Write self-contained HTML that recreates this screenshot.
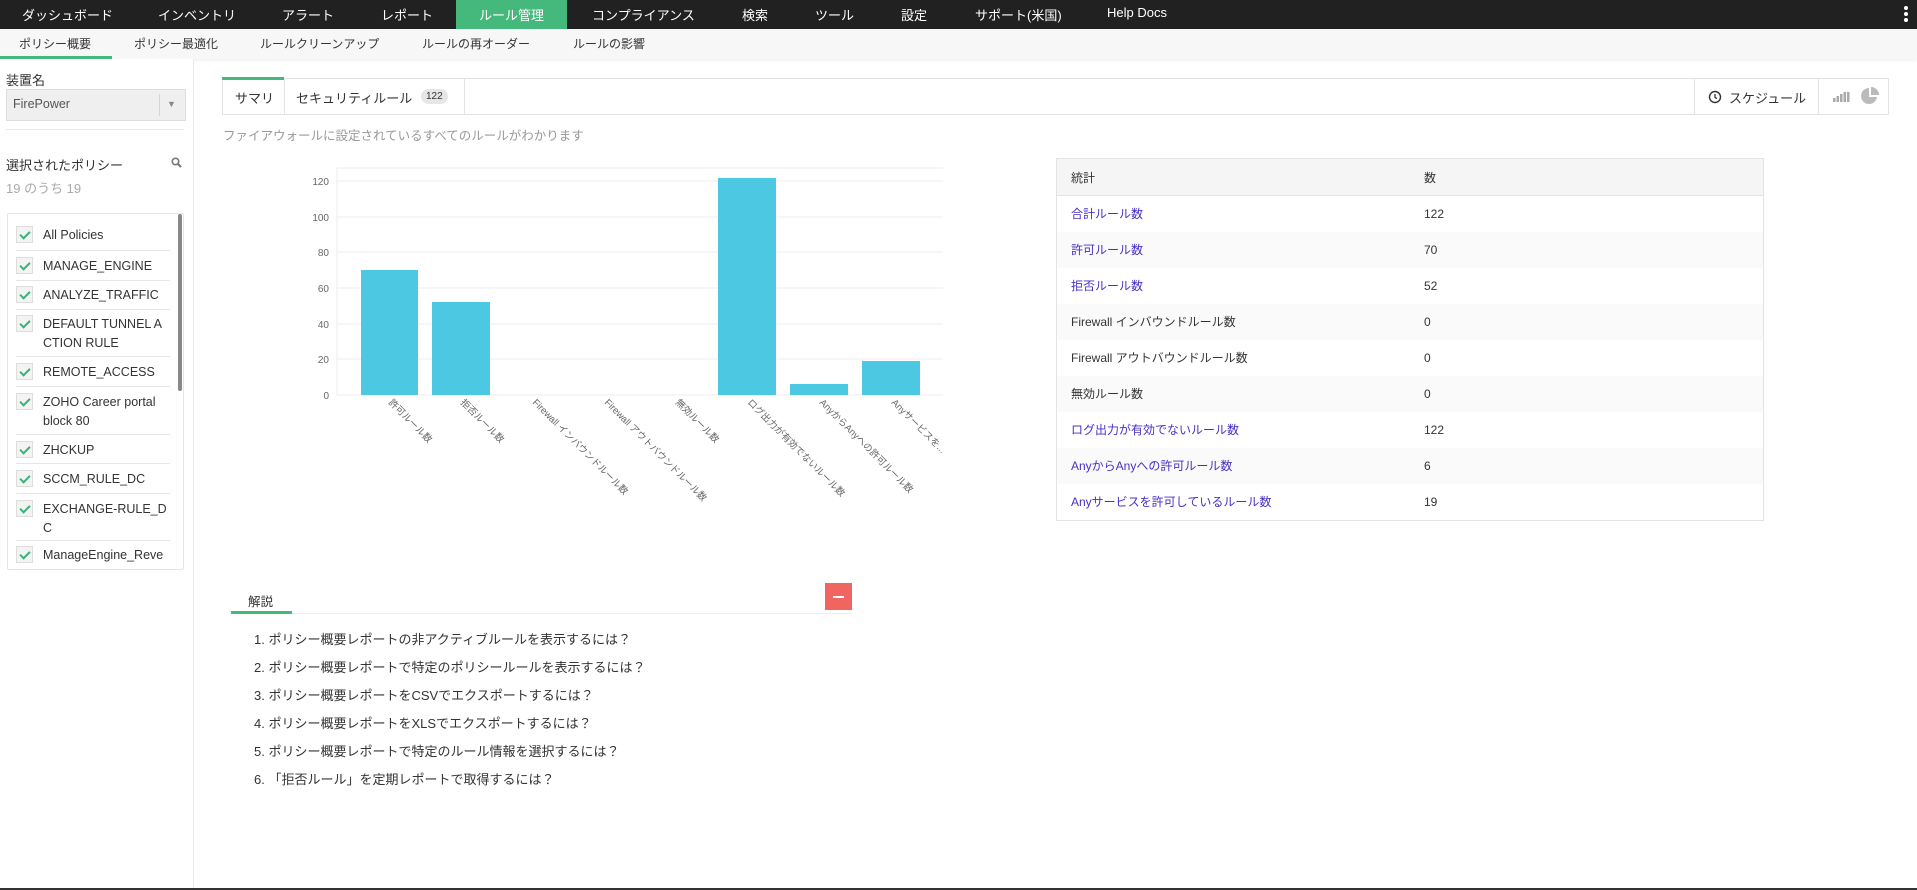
<!DOCTYPE html>
<html><head><meta charset="utf-8">
<style>
*{margin:0;padding:0;box-sizing:border-box}
body{width:1917px;height:890px;overflow:hidden;background:#fff;font-family:"Liberation Sans","Noto Sans CJK JP",sans-serif;color:#333;position:relative}
.a{position:absolute;white-space:nowrap}
#top{position:absolute;left:0;top:0;width:1917px;height:29px;background:#212121}
#top .a{color:#fff;font-size:13px;top:5px}
#sub{position:absolute;left:0;top:29px;width:1917px;height:30px;background:#f7f7f7;box-shadow:0 2px 3px rgba(0,0,0,.06)}
#sub .a{font-size:12px;top:6px;color:#333}
#side{position:absolute;left:0;top:59px;width:194px;height:830px;border-right:1px solid #e8e8e8;background:#fff}
.item{position:absolute;left:16px;width:154px;border-bottom:1px solid #e6e6e6;font-size:12.5px;color:#333}
.cb{position:absolute;left:0;width:17px;height:17px;border:1px solid #ddd;background:#f3f3f3}
.cb:after{content:"";position:absolute;left:5px;top:2px;width:4px;height:8px;border:solid #3bb17a;border-width:0 2px 2px 0;transform:rotate(45deg)}
.item span{position:absolute;left:27px;line-height:19px}
.tr{position:absolute;left:1057px;width:706px;height:36px;font-size:12px;line-height:16px}
.tr .l{position:absolute;left:14px;top:10px}
.tr .r{position:absolute;left:367px;top:10px;color:#333}
.lk{color:#4a2ec7}
.q{position:absolute;left:254px;font-size:13px;color:#333;line-height:16px}
</style></head><body>
<div id="top">
<div class="a" style="left:456px;top:0;width:111px;height:29px;background:#45b97c;position:absolute"></div>
<span class="a" style="left:22px">ダッシュボード</span>
<span class="a" style="left:158px">インベントリ</span>
<span class="a" style="left:282px">アラート</span>
<span class="a" style="left:381px">レポート</span>
<span class="a" style="left:479px">ルール管理</span>
<span class="a" style="left:592px">コンプライアンス</span>
<span class="a" style="left:742px">検索</span>
<span class="a" style="left:815px">ツール</span>
<span class="a" style="left:901px">設定</span>
<span class="a" style="left:975px">サポート(米国)</span>
<span class="a" style="left:1107px">Help Docs</span>
<div class="a" style="left:1904px;top:6px;width:4px;height:4px;border-radius:2px;background:#fff"></div>
<div class="a" style="left:1904px;top:12px;width:4px;height:4px;border-radius:2px;background:#fff"></div>
<div class="a" style="left:1904px;top:18px;width:4px;height:4px;border-radius:2px;background:#fff"></div>
</div>
<div id="sub">
<span class="a" style="left:19px">ポリシー概要</span>
<span class="a" style="left:134px">ポリシー最適化</span>
<span class="a" style="left:260px">ルールクリーンアップ</span>
<span class="a" style="left:422px">ルールの再オーダー</span>
<span class="a" style="left:573px">ルールの影響</span>
<div class="a" style="left:0;top:27px;width:112px;height:3px;background:#45b97c"></div>
</div>
<div id="side">
<span class="a" style="left:6px;top:11px;font-size:13px">装置名</span>
<div class="a" style="left:6px;top:30px;width:180px;height:32px;background:#efefef;border:1px solid #ddd"></div>
<span class="a" style="left:13px;top:38px;font-size:12.5px;color:#555">FirePower</span>
<div class="a" style="left:159px;top:35px;width:1px;height:22px;background:#d5d5d5"></div>
<span class="a" style="left:167px;top:40px;font-size:9px;color:#888">▼</span>
<div class="a" style="left:6px;top:70px;width:178px;height:1px;background:#e8e8e8"></div>
<span class="a" style="left:6px;top:96px;font-size:13px">選択されたポリシー</span>
<svg class="a" style="left:171px;top:98px" width="11" height="11"><circle cx="4.5" cy="4.5" r="3.2" fill="none" stroke="#777" stroke-width="1.6"/><line x1="7" y1="7" x2="10" y2="10" stroke="#777" stroke-width="2"/></svg>
<span class="a" style="left:6px;top:119px;font-size:13px;color:#aaa">19 のうち 19</span>
<div class="a" style="left:7px;top:154px;width:177px;height:357px;border:1px solid #e5e5e5;border-radius:2px"></div>
<div class="a" style="left:178px;top:155px;width:4px;height:177px;background:#888;border-radius:2px"></div>
<div class="item" style="top:162px;height:30px"><div class="cb" style="top:5px"></div><span style="top:5px">All Policies</span></div>
<div class="item" style="top:192px;height:30px"><div class="cb" style="top:6px"></div><span style="top:6px">MANAGE_ENGINE</span></div>
<div class="item" style="top:222px;height:29px"><div class="cb" style="top:5px"></div><span style="top:5px">ANALYZE_TRAFFIC</span></div>
<div class="item" style="top:251px;height:47px"><div class="cb" style="top:5px"></div><span style="top:5px">DEFAULT TUNNEL A<br>CTION RULE</span></div>
<div class="item" style="top:298px;height:30px"><div class="cb" style="top:6px"></div><span style="top:6px">REMOTE_ACCESS</span></div>
<div class="item" style="top:328px;height:48px"><div class="cb" style="top:6px"></div><span style="top:6px">ZOHO Career portal<br>block 80</span></div>
<div class="item" style="top:376px;height:29px"><div class="cb" style="top:6px"></div><span style="top:6px">ZHCKUP</span></div>
<div class="item" style="top:405px;height:30px"><div class="cb" style="top:6px"></div><span style="top:6px">SCCM_RULE_DC</span></div>
<div class="item" style="top:435px;height:47px"><div class="cb" style="top:6px"></div><span style="top:6px">EXCHANGE-RULE_D<br>C</span></div>
<div class="item" style="top:482px;height:26px;border:none"><div class="cb" style="top:5px"></div><span style="top:5px">ManageEngine_Reve</span></div>
</div>
<!-- tabs -->
<div class="a" style="left:222px;top:78px;width:1667px;height:37px;border:1px solid #e3e3e3"></div>
<div class="a" style="left:222px;top:77px;width:62px;height:3px;background:#45b97c"></div>
<div class="a" style="left:284px;top:79px;width:1px;height:36px;background:#e3e3e3"></div>
<div class="a" style="left:464px;top:79px;width:1px;height:36px;background:#e3e3e3"></div>
<span class="a" style="left:235px;top:88px;font-size:13px">サマリ</span>
<span class="a" style="left:296px;top:88px;font-size:13px">セキュリティルール</span>
<span class="a" style="left:421px;top:89px;font-size:10px;background:#e6e6e6;border-radius:8px;padding:2px 5px">122</span>
<div class="a" style="left:1694px;top:79px;width:1px;height:36px;background:#e3e3e3"></div>
<div class="a" style="left:1818px;top:79px;width:1px;height:36px;background:#e3e3e3"></div>
<svg class="a" style="left:1708px;top:90px" width="14" height="14"><circle cx="7" cy="7" r="5.5" fill="none" stroke="#333" stroke-width="1.4"/><path d="M7 4v3.5l2 1" fill="none" stroke="#333" stroke-width="1.3"/></svg>
<span class="a" style="left:1729px;top:88px;font-size:13px">スケジュール</span>
<svg class="a" style="left:1832px;top:88px" width="18" height="16"><rect x="1" y="10" width="2.5" height="4" fill="#aaa"/><rect x="4.5" y="8" width="2.5" height="6" fill="#aaa"/><rect x="8" y="6" width="2.5" height="8" fill="#aaa"/><rect x="11.5" y="4" width="2.5" height="10" fill="#aaa"/><rect x="15" y="4" width="2.5" height="10" fill="#aaa"/></svg>
<svg class="a" style="left:1860px;top:86px" width="20" height="20"><path d="M9 2A8 8 0 1 0 17 11H9Z" fill="#bbb"/><path d="M11 1v8h8A8 8 0 0 0 11 1Z" fill="#bbb"/></svg>
<span class="a" style="left:223px;top:125px;font-size:12.5px;color:#999">ファイアウォールに設定されているすべてのルールがわかります</span>
<!-- chart -->
<svg class="a" style="left:0;top:0" width="1000" height="560" font-family="Liberation Sans,Noto Sans CJK JP,sans-serif">
<g stroke="#eee" stroke-width="1">
<line x1="337" y1="168" x2="943" y2="168"/>
<line x1="337" y1="181" x2="943" y2="181"/><line x1="337" y1="217" x2="943" y2="217"/><line x1="337" y1="252" x2="943" y2="252"/><line x1="337" y1="288" x2="943" y2="288"/><line x1="337" y1="324" x2="943" y2="324"/><line x1="337" y1="359" x2="943" y2="359"/><line x1="337" y1="395" x2="943" y2="395"/>
<line x1="337" y1="168" x2="337" y2="395"/>
</g>
<g font-size="10" fill="#666" text-anchor="end">
<text x="329" y="185">120</text><text x="329" y="221">100</text><text x="329" y="256">80</text><text x="329" y="292">60</text><text x="329" y="328">40</text><text x="329" y="363">20</text><text x="329" y="399">0</text>
</g>
<g fill="#4dc8e3">
<rect x="361" y="270" width="57" height="125"/>
<rect x="432" y="302" width="58" height="93"/>
<rect x="718" y="178" width="58" height="217"/>
<rect x="790" y="384" width="58" height="11"/>
<rect x="862" y="361" width="58" height="34"/>
</g>
<g font-size="9.5" fill="#666">
<text transform="translate(388,403) rotate(45)">許可ルール数</text>
<text transform="translate(460,403) rotate(45)">拒否ルール数</text>
<text transform="translate(532,403) rotate(45)">Firewall インバウンドルール数</text>
<text transform="translate(604,403) rotate(45)">Firewall アウトバウンドルール数</text>
<text transform="translate(675,403) rotate(45)">無効ルール数</text>
<text transform="translate(747,403) rotate(45)">ログ出力が有効でないルール数</text>
<text transform="translate(819,403) rotate(45)">AnyからAnyへの許可ルール数</text>
<text transform="translate(891,403) rotate(45)">Anyサービスを...</text>
</g>
</svg>
<!-- table -->
<div class="tr" style="top:159px;height:37px;background:#f5f5f5;border-bottom:1px solid #e3e3e3"><span class="l" style="top:11px">統計</span><span class="r" style="top:11px">数</span></div>
<div class="tr" style="top:196px"><span class="l lk">合計ルール数</span><span class="r">122</span></div>
<div class="tr" style="top:232px;background:#fafafa"><span class="l lk">許可ルール数</span><span class="r">70</span></div>
<div class="tr" style="top:268px"><span class="l lk">拒否ルール数</span><span class="r">52</span></div>
<div class="tr" style="top:304px;background:#fafafa"><span class="l">Firewall インバウンドルール数</span><span class="r">0</span></div>
<div class="tr" style="top:340px"><span class="l">Firewall アウトバウンドルール数</span><span class="r">0</span></div>
<div class="tr" style="top:376px;background:#fafafa"><span class="l">無効ルール数</span><span class="r">0</span></div>
<div class="tr" style="top:412px"><span class="l lk">ログ出力が有効でないルール数</span><span class="r">122</span></div>
<div class="tr" style="top:448px;background:#fafafa"><span class="l lk">AnyからAnyへの許可ルール数</span><span class="r">6</span></div>
<div class="tr" style="top:484px"><span class="l lk">Anyサービスを許可しているルール数</span><span class="r">19</span></div>
<div class="a" style="left:1056px;top:158px;width:708px;height:363px;border:1px solid #e3e3e3"></div>
<!-- 解説 -->
<span class="a" style="left:248px;top:591px;font-size:12.5px">解説</span>
<div class="a" style="left:231px;top:613px;width:621px;height:1px;background:#eee"></div>
<div class="a" style="left:231px;top:611px;width:61px;height:3px;background:#45b97c"></div>
<div class="a" style="left:825px;top:583px;width:27px;height:27px;background:#f0655f"></div>
<div class="a" style="left:833px;top:596px;width:11px;height:1.5px;background:#fff"></div>
<span class="q a" style="top:632px">1. ポリシー概要レポートの非アクティブルールを表示するには？</span>
<span class="q a" style="top:660px">2. ポリシー概要レポートで特定のポリシールールを表示するには？</span>
<span class="q a" style="top:688px">3. ポリシー概要レポートをCSVでエクスポートするには？</span>
<span class="q a" style="top:716px">4. ポリシー概要レポートをXLSでエクスポートするには？</span>
<span class="q a" style="top:744px">5. ポリシー概要レポートで特定のルール情報を選択するには？</span>
<span class="q a" style="top:772px">6. 「拒否ルール」を定期レポートで取得するには？</span>
<div class="a" style="left:0;top:888px;width:1917px;height:2px;background:#333"></div>
</body></html>
